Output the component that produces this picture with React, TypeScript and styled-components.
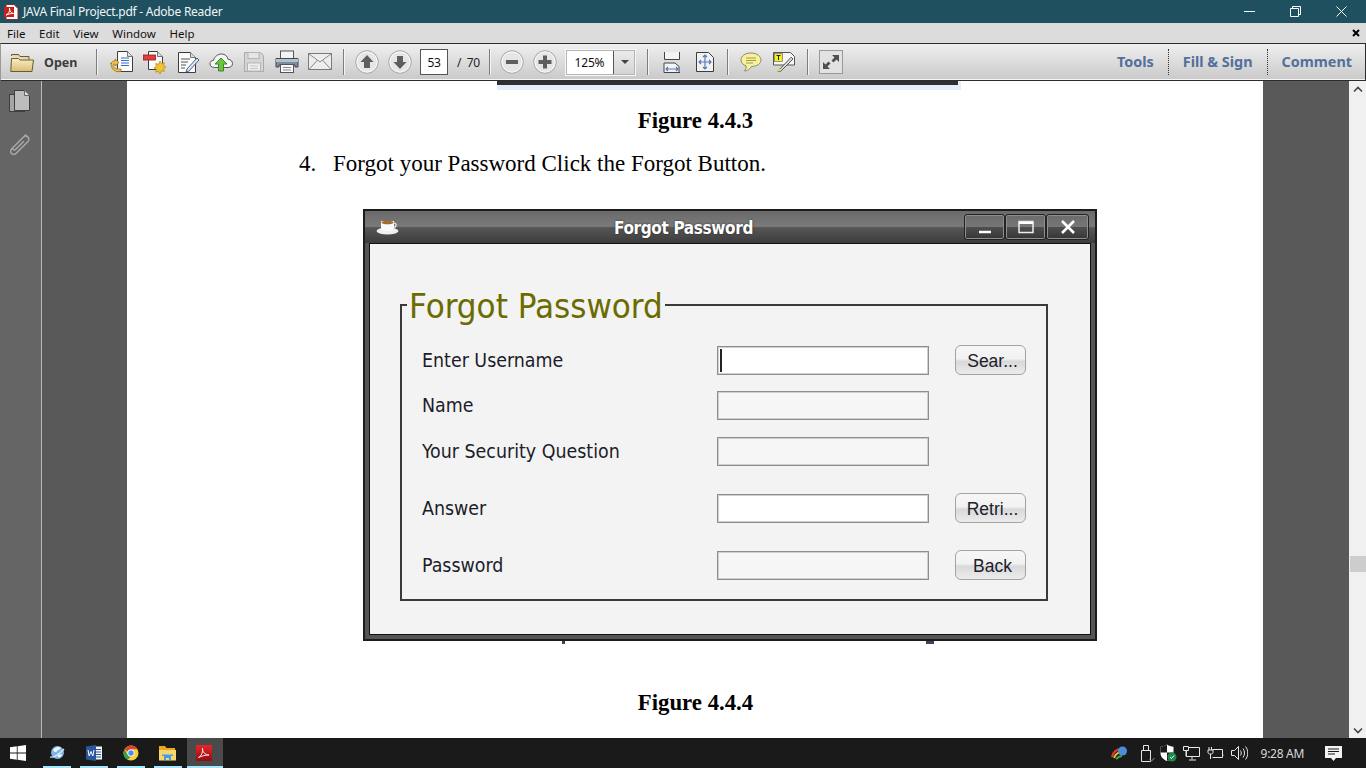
import * as React from "react";
import styled, { createGlobalStyle } from "styled-components";

const GlobalStyle = createGlobalStyle`
  html, body {
    margin: 0;
    padding: 0;
    width: 1366px;
    height: 768px;
    overflow: hidden;
    background: #595959;
  }
  * { box-sizing: border-box; }
`;

const UI_FONT = `"Noto Sans", "Open Sans", sans-serif`;
const TAHOMA = `"DejaVu Sans", "Noto Sans", sans-serif`;

const Shell = styled.div`
  width: 1366px;
  height: 768px;
  display: flex;
  flex-direction: column;
  font-family: ${UI_FONT};
  overflow: hidden;
`;

/* ---------- title bar ---------- */

const TitleBar = styled.div`
  height: 23px;
  flex: none;
  background: #1e505f;
  display: flex;
  align-items: center;
  padding-left: 4px;
  color: #f2f5f6;
  font-size: 12px;
`;

const TitleText = styled.span`
  margin-left: 4px;
  letter-spacing: -0.25px;
`;

const CaptionButtons = styled.div`
  margin-left: auto;
  display: flex;
  height: 100%;
  padding-right: 2px;
`;

const CaptionButton = styled.div`
  width: 46px;
  height: 100%;
  display: flex;
  align-items: center;
  justify-content: center;
`;

/* ---------- menu bar ---------- */

const MenuBar = styled.div`
  height: 20px;
  flex: none;
  background: #dcdcdc;
  display: flex;
  align-items: center;
  padding: 0 6px 0 7px;
  gap: 13.7px;
  font-size: 11.5px;
  color: #111;
`;

const MenuClose = styled.div`
  margin-left: auto;
  display: flex;
`;

/* ---------- toolbar ---------- */

const Toolbar = styled.div`
  height: 38px;
  flex: none;
  display: flex;
  align-items: center;
  border: 1px solid #2c2c2c;
  border-left-color: #9a9a9a;
  background: linear-gradient(#efefef, #c9c9c9);
  box-shadow: inset 0 -1px 0 #f6f6f6;
`;

const OpenButton = styled.div`
  width: 95px;
  display: flex;
  align-items: center;
  padding-left: 9px;
  gap: 10px;
  font-size: 12.5px;
  font-weight: 700;
  color: #3c3c3c;
`;

const Sep = styled.div`
  width: 2px;
  height: 26px;
  flex: none;
  background: linear-gradient(90deg, #7d7d7d 50%, #f4f4f4 50%);
`;

const Group = styled.div<{ $ml: number }>`
  display: flex;
  align-items: center;
  margin-left: ${({ $ml }) => $ml}px;
`;

const Slot = styled.div`
  width: 33px;
  height: 26px;
  display: flex;
  align-items: center;
  justify-content: center;
`;

const PageBox = styled.div`
  width: 28px;
  height: 26px;
  background: #fff;
  border: 1px solid #555;
  display: flex;
  align-items: center;
  justify-content: center;
  font-size: 12px;
  color: #111;
  letter-spacing: -0.3px;
`;

const PageTotal = styled.div`
  width: 23px;
  font-size: 12px;
  color: #222;
  white-space: pre;
  letter-spacing: -0.3px;
`;

const ZoomCombo = styled.div`
  width: 71px;
  height: 27px;
  border: 1px solid #f6f6f6;
  display: flex;
  outline: 1px solid #b5b5b5;
  outline-offset: -2px;
`;

const ZoomValue = styled.div`
  width: 48px;
  background: #fff;
  border-right: 1px solid #555;
  display: flex;
  align-items: center;
  justify-content: center;
  font-size: 12px;
  color: #111;
  letter-spacing: -0.2px;
`;

const ZoomArrow = styled.div`
  flex: 1;
  display: flex;
  align-items: center;
  justify-content: center;
  background: linear-gradient(#ededed, #d2d2d2);

  &::after {
    content: "";
    border-left: 4px solid transparent;
    border-right: 4px solid transparent;
    border-top: 4px solid #444;
  }
`;

const TaskTabs = styled.div`
  margin-left: auto;
  display: flex;
  align-items: center;
  height: 100%;
  padding-right: 13px;
`;

const TaskTab = styled.div<{ $divided?: boolean }>`
  font-size: 14.4px;
  font-weight: 700;
  color: #51709a;
  height: 26px;
  line-height: 25px;
  padding-left: ${({ $divided }) => ($divided ? 14 : 0)}px;
  padding-right: 14px;
  border-left: ${({ $divided }) => ($divided ? "1px dotted #333" : "none")};

  &:last-child {
    padding-right: 0;
  }
`;

/* ---------- document ---------- */

const Main = styled.div`
  flex: 1;
  min-height: 0;
  display: flex;
`;

const Rail = styled.div`
  width: 42px;
  flex: none;
  background: #656565;
  border-right: 1px solid #b9b9b9;
  display: flex;
  flex-direction: column;
  align-items: center;
  padding: 9px 3px 0 0;
  gap: 20px;
`;

const DocArea = styled.div`
  flex: 1;
  min-width: 0;
  background: #595959;
  padding: 0 86px 0 85px;
`;

const Page = styled.div`
  height: 100%;
  background: #fff;
  overflow: hidden;
  font-family: "Liberation Serif", serif;
  color: #000;
`;

const ClippedFigure = styled.div`
  width: 464px;
  height: 9px;
  margin-left: 370px;
  background: #e4eefa;
`;

const ClippedEdge = styled.div`
  width: 461px;
  height: 4px;
  background: #2f2f33;
`;

const Caption = styled.div<{ $mt: number }>`
  margin-top: ${({ $mt }) => $mt}px;
  height: 24px;
  line-height: 24px;
  font-size: 22.8px;
  font-weight: 700;
  text-align: center;
  padding-left: 1px;
`;

const ListItem = styled.div`
  margin-top: 19px;
  padding-left: 172px;
  height: 24px;
  line-height: 24px;
  font-size: 23px;
  display: flex;
`;

const ListNumber = styled.span`
  width: 34px;
`;

/* ---------- screenshot of the java window inside the page ---------- */

const Frame = styled.div`
  margin: 33px 0 0 236px;
  width: 734px;
  height: 432px;
  border: 2px solid #1c1c1c;
  background: #555;
  display: flex;
  flex-direction: column;
  padding: 0 4px 4px;
`;

const FrameTitle = styled.div`
  height: 32px;
  flex: none;
  margin: 0 -4px;
  padding: 3px 7px 4px 11px;
  display: flex;
  align-items: center;
  background: linear-gradient(#6a6a6a, #7a7a7a 48%, #565656 52%, #3c3c3c);
`;

const FrameTitleText = styled.div`
  margin: 2px 0 0 215px;
  font-family: ${TAHOMA};
  font-stretch: condensed;
  font-size: 17px;
  font-weight: 700;
  letter-spacing: -0.35px;
  color: #fff;
  text-shadow: 0 0 2px #222;
`;

const FrameButtons = styled.div`
  margin-left: auto;
  display: flex;
  gap: 2px;
`;

const FrameButton = styled.div<{ $wide?: boolean }>`
  width: ${({ $wide }) => ($wide ? 41 : 39)}px;
  height: 24px;
  border: 1px solid #8f8f8f;
  outline: 1px solid #222;
  border-radius: 2px;
  display: flex;
  align-items: center;
  justify-content: center;
  background: linear-gradient(#6c6c6c, #767676 48%, #4e4e4e 52%, #383838);
`;

const FrameBody = styled.div`
  flex: 1;
  border: 1px solid #111;
  background: #f3f3f3;
  padding: 41px 42px 0 30px;
`;

const Fields = styled.fieldset`
  margin: 0;
  padding: 0 20px 20px;
  min-width: 0;
  border: 2px solid #3a3a3a;
`;

const FieldsLegend = styled.legend`
  margin-left: -15px;
  padding: 0 2px;
  height: 40px;
  line-height: 42px;
  font-family: ${TAHOMA};
  font-stretch: condensed;
  font-size: 34.6px;
  color: #6b6b00;
`;

const FormRow = styled.div<{ $mt: number }>`
  display: grid;
  grid-template-columns: 269px 212px 71px;
  column-gap: 26px;
  height: 29px;
  align-items: center;
  margin-top: ${({ $mt }) => $mt}px;
  font-family: ${TAHOMA};
  font-stretch: condensed;
  font-size: 19.4px;
  color: #1c1c2a;
`;

const Field = styled.div<{ $disabled?: boolean }>`
  height: 29px;
  border: 1px solid #8e8e8e;
  box-shadow: inset 0 0 0 1px #cfcfcf;
  background: ${({ $disabled }) => ($disabled ? "#f6f6f6" : "#fff")};
  display: flex;
  align-items: center;
  padding-left: 2px;
`;

const Caret = styled.div`
  width: 2px;
  height: 23px;
  background: #222;
`;

const SwingButton = styled.div`
  height: 30px;
  border: 1px solid #a3a3a3;
  border-radius: 6px;
  background: linear-gradient(#f6f6f6, #f2f2f2 45%, #d9d9d9 55%, #ececec);
  display: flex;
  align-items: center;
  justify-content: center;
  padding: 2px 0 0 4px;
  font-family: "Liberation Sans", sans-serif;
  font-size: 17.5px;
  color: #20202c;
`;

const Ticks = styled.div`
  margin-left: 435px;
  width: 372px;
  height: 3px;
  display: flex;
  justify-content: space-between;
`;

const Tick = styled.div<{ $w: number }>`
  width: ${({ $w }) => $w}px;
  background: #3b4450;
`;

/* ---------- scrollbar ---------- */

const Scrollbar = styled.div`
  width: 17px;
  flex: none;
  background: #f0f0f0;
  display: flex;
  flex-direction: column;
  align-items: center;
  padding: 5px 0 4px;
`;

const Thumb = styled.div`
  width: 16px;
  height: 16px;
  margin-top: 463px;
  background: #cdcdcd;
`;

const ScrollEnd = styled.div`
  margin-top: auto;
  display: flex;
`;

/* ---------- taskbar ---------- */

const Taskbar = styled.div`
  height: 30px;
  flex: none;
  background: #1a1a1a;
  display: flex;
  align-items: stretch;
`;

const StartButton = styled.div`
  width: 39px;
  display: flex;
  align-items: center;
  padding-left: 10px;
`;

const TaskItem = styled.div<{ $active?: boolean }>`
  width: ${({ $active }) => ($active ? 36 : 37)}px;
  display: flex;
  align-items: center;
  justify-content: center;
  padding-right: 2px;
  position: relative;
  background: ${({ $active }) => ($active ? "#4a4a4a" : "transparent")};

  &::after {
    content: "";
    position: absolute;
    bottom: 0;
    left: ${({ $active }) => ($active ? 0 : 4)}px;
    right: ${({ $active }) => ($active ? 0 : 5)}px;
    height: 2px;
    background: #a6e7fd;
  }
`;

const Tray = styled.div`
  margin-left: auto;
  display: flex;
  align-items: center;
  padding-right: 24px;
`;

const TrayIcon = styled.div<{ $ml: number }>`
  margin-left: ${({ $ml }) => $ml}px;
  display: flex;
`;

const Clock = styled.div`
  margin-left: 13px;
  margin-right: 21px;
  font-size: 12px;
  color: #d8d8d8;
  letter-spacing: -0.3px;
`;

/* ---------- drawings ---------- */

const ReaderDoc = () => (
  <svg width="15" height="16" viewBox="0 0 15 16">
    <path d="M2 .5h8l4 4v11H2z" fill="#fff" stroke="#8a2a2a" />
    <rect x="0" y="3" width="10" height="10" fill="#c8201e" />
    <path d="M2 11c3-1 4-4 3.5-7 0 3 1.500 5 4 5.500-3 0-5 .5-7.500 1.500z" fill="none" stroke="#fff" strokeWidth="1" />
  </svg>
);

const Line = ({ d, w = 1, c = "#fff" }: { d: string; w?: number; c?: string }) => (
  <path d={d} fill="none" stroke={c} strokeWidth={w} />
);

const FolderIcon = () => (
  <svg width="24" height="20" viewBox="0 0 24 20">
    <defs>
      <linearGradient id="fold" x1="0" y1="0" x2="0" y2="1">
        <stop offset="0" stopColor="#fbeec0" />
        <stop offset="1" stopColor="#d9bd78" />
      </linearGradient>
    </defs>
    <path d="M1.500 4V2.500h7l1.500 2h9v3" fill="#e6d6a2" stroke="#6a5a30" />
    <path d="M.8 19.500 1.500 6.500h7L10 8h13.500l-1.500 11.500z" fill="url(#fold)" stroke="#6a5a30" />
  </svg>
);

const DocShape = ({ x = 7, y = 1, w = 15, h = 20 }: { x?: number; y?: number; w?: number; h?: number }) => (
  <>
    <path
      d={`M${x + 0.5} ${y + 0.5}h${w - 5}l5 5v${h - 5}h-${w}z`}
      fill="#fbfbfb"
      stroke="#3c3c3c"
    />
    <path d={`M${x + w - 4.500} ${y + 0.5}v5h5`} fill="#ddd" stroke="#777" />
  </>
);

const OpenDocIcon = () => (
  <svg width="24" height="24" viewBox="0 0 24 24">
    <DocShape />
    <Line d="M11 8h8M11 10.500h8M11 13h8M11 15.500h8" c="#3a6fc8" w={1.200} />
    <path d="M1 13c0-2 2-3 4-3v-2l4 3.500-4 3.500v-2c-1 0-2 .5-2 2 0 2 3 3 8 3v2.500c-6 1-10-2-10-8.500z" fill="#f0c050" stroke="#9a7420" strokeWidth=".8" transform="translate(0 1)" />
  </svg>
);

const RedactIcon = () => (
  <svg width="24" height="24" viewBox="0 0 24 24">
    <DocShape x={5} y={1} w={14} h={18} />
    <rect x="0.5" y="5" width="12" height="5" fill="#e43c3c" stroke="#8c2020" strokeWidth=".8" />
    <path d="M17 11l1.500 2.500 2.800-.7-.7 2.800 2.400 1.500-2.400 1.500.7 2.800-2.800-.7L17 24l-1.500-2.500-2.800.7.7-2.800L11 17.900l2.400-1.500-.7-2.800 2.800.7z" fill="#f2c230" stroke="#a8861c" strokeWidth=".7" />
  </svg>
);

const EditDocIcon = () => (
  <svg width="24" height="24" viewBox="0 0 24 24">
    <DocShape x={2} y={2} w={17} h={20} />
    <Line d="M5 9h9M5 12h7M5 15h5M5 18h4" c="#555" />
    <path d="M11 19l-1 3 3-1L23 10l-2-2z" fill="#dfe7f3" stroke="#47628e" />
  </svg>
);

const CloudIcon = () => (
  <svg width="24" height="22" viewBox="0 0 24 22">
    <path d="M5.500 16.500C2.500 16.500 1 14.800 1 12.800c0-2 1.500-3.500 3.500-3.500C5.500 5.500 9 3 12.500 3c3.500 0 6 2.300 6.500 5.300 2.800.2 4.500 2 4.500 4.300 0 2.300-1.800 3.900-4.500 3.900z" fill="#f6f6f6" stroke="#555" />
    <path d="M12 7l-6 6h3.500v7h5v-7H18z" fill="#6cc43c" stroke="#3a8a28" />
  </svg>
);

const FloppyIcon = () => (
  <svg width="20" height="22" viewBox="0 0 20 22">
    <path d="M.5 1.500h16l3 3v16H.5z" fill="#d5d5d5" stroke="#aaa" />
    <rect x="4" y="1.500" width="11" height="6" fill="#e6e6e6" stroke="#b5b5b5" />
    <rect x="3.500" y="12" width="13" height="8" fill="#eee" stroke="#b5b5b5" />
    <Line d="M6 15h8M6 17.500h8" c="#c4c4c4" />
  </svg>
);

const PrinterIcon = () => (
  <svg width="24" height="24" viewBox="0 0 24 24">
    <rect x="5.500" y="1" width="13" height="8" fill="#f4f4f4" stroke="#555" />
    <path d="M1 8.500h22V17h-3v-2H4v2H1z" fill="#7d8d9d" stroke="#3e4a58" />
    <rect x="1" y="9" width="22" height="3" fill="#b4c0cc" />
    <rect x="5.500" y="14.500" width="13" height="8" fill="#fafafa" stroke="#555" />
    <Line d="M8 17.500h8M8 20h8" c="#888" />
  </svg>
);

const MailIcon = () => (
  <svg width="24" height="18" viewBox="0 0 24 18">
    <rect x=".5" y=".5" width="23" height="16" fill="#ededed" stroke="#7a7a7a" />
    <Line d="M1 1l11 8 11-8M1 16.500l8.500-9.500M23 16.500l-8.500-9.500" c="#8c8c8c" />
  </svg>
);

const RoundButton = ({ kind }: { kind: "up" | "down" | "minus" | "plus" }) => {
  const shapes = {
    up: "M12 5l6.500 7H15v6H9v-6H5.500z",
    down: "M12 19l6.500-7H15V6H9v6H5.500z",
    minus: "M6 10h12v4H6z",
    plus: "M10 5.500h4V10h4.500v4H14v4.500h-4V14H5.500v-4H10z",
  };
  return (
    <svg width="24" height="24" viewBox="0 0 24 24">
      <circle cx="12" cy="12" r="11.300" fill="#e6e6e6" stroke="#a8a8a8" />
      <circle cx="12" cy="12" r="10" fill="none" stroke="#f8f8f8" />
      <path d={shapes[kind]} fill="#5e5e5e" />
    </svg>
  );
};

const FitWidthIcon = () => (
  <svg width="18" height="21" viewBox="0 0 18 21">
    <path d="M1.500 0v7.500h15V0" fill="#f4f4f4" stroke="#444" />
    <path d="M1 20.500V11h11l4 3.500v6" fill="#f4f4f4" stroke="#444" />
    <path d="M1 20.500h16" stroke="#444" />
    <Line d="M3 17h12M5 15l-2 2 2 2M13 15l2 2-2 2" c="#5a78b8" w={1.200} />
  </svg>
);

const FitPageIcon = () => (
  <svg width="18" height="20" viewBox="0 0 18 20">
    <path d="M.5.500h12l5 5v14H.5z" fill="#f2f2f2" stroke="#3c3c3c" />
    <Line d="M9 3v14M3 10h12M7 5l2-2 2 2M7 15l2 2 2-2M5 8l-2 2 2 2M13 8l2 2-2 2" c="#5a78b8" w={1.200} />
  </svg>
);

const CommentIcon = () => (
  <svg width="22" height="20" viewBox="0 0 22 20">
    <path d="M11 1C5 1 1 4 1 8c0 3 2.500 5 5 5.800C6.500 15.500 6 17 4.500 19c3 0 5.500-2 7-4.500 5.500 0 9.500-3 9.500-6.500S17 1 11 1z" fill="#f8f09a" stroke="#8a8a70" />
    <Line d="M6 6h10M6 8.500h10M6 11h7" c="#a09a50" />
  </svg>
);

const SignIcon = () => (
  <svg width="22" height="20" viewBox="0 0 22 20">
    <path d="M.5.500h17l4 4V13H.5z" fill="#f6f6f6" stroke="#555" />
    <rect x="1.500" y="1.500" width="8" height="8" fill="#f4ee20" stroke="#555" strokeWidth=".6" />
    <Line d="M3.500 3.500h4M5.500 3.500v4.500" c="#222" />
    <path d="M6 18l-1 2 2.500-.5L20 7l-1.800-1.800z" fill="#dcdcdc" stroke="#555" />
    <circle cx="6" cy="18" r="1.500" fill="#e4d050" />
  </svg>
);

const FullScreenIcon = () => (
  <svg width="24" height="24" viewBox="0 0 24 24">
    <rect x=".5" y=".5" width="23" height="23" fill="#e2e2e2" stroke="#9a9a9a" />
    <path d="M13 5h7v7l-2.500-2.500-3 3-2-2 3-3zM11 19H4v-7l2.500 2.500 3-3 2 2-3 3z" fill="#505050" />
  </svg>
);

const PagesIcon = () => (
  <svg width="21" height="22" viewBox="0 0 21 22">
    <rect x=".5" y="4.500" width="15" height="17" fill="#a5a5a5" stroke="#3e3e3e" />
    <path d="M5.500.500h10l5 5v15h-15z" fill="#bdbdbd" stroke="#3e3e3e" />
    <path d="M15.500.5v5h5" fill="#dcdcdc" stroke="#666" />
  </svg>
);

const ClipIcon = () => (
  <svg width="22" height="24" viewBox="0 0 22 24">
    <path d="M18 2.500 4 16.500c-2 2-1.500 4-.5 5s3 1.500 5-.5L20 9.500c1.500-1.500 1-3.500 0-4.500s-3-1.500-4.500 0L5.500 15c-1 1-.8 2-.2 2.500s1.500.7 2.500-.3l8-8" fill="none" stroke="#a8a8a8" strokeWidth="1.500" />
  </svg>
);

const CupIcon = () => (
  <svg width="23" height="16" viewBox="0 0 23 16">
    <ellipse cx="11.500" cy="12" rx="11" ry="3.500" fill="#f0f0f0" />
    <path d="M5 2h13v6c0 3-3 4-6.500 4S5 11 5 8z" fill="#fafafa" />
    <ellipse cx="11.500" cy="3.500" rx="6" ry="1.800" fill="#a86a28" />
    <path d="M18 4c3 0 3 4-1 5" fill="none" stroke="#eee" strokeWidth="1.200" />
  </svg>
);

const WinLogo = () => (
  <svg width="16" height="16" viewBox="0 0 16 16">
    <path d="M0 2.300 6.800 1.300v6.300H0zM7.600 1.200 16 0v7.600H7.600zM0 8.400h6.800v6.300L0 13.700zM7.600 8.400H16V16l-8.400-1.200z" fill="#fff" />
  </svg>
);

const GlobeIcon = () => (
  <svg width="16" height="16" viewBox="0 0 16 16">
    <circle cx="8.500" cy="7.500" r="6.500" fill="#7fb6ea" />
    <path d="M4 5c2-3 6-4 8-2-1 2-3 1-4 3s-3 1-4-1zM9 10c2-1 4-1 4 0-1 2-3 3-4 2z" fill="#f2f6fa" />
    <path d="M1 12c3 1 9-2 14-8" fill="none" stroke="#dfe9f2" strokeWidth="1.200" />
  </svg>
);

const WordIcon = () => (
  <svg width="16" height="16" viewBox="0 0 16 16">
    <rect x="6" y="1.500" width="10" height="13" fill="#f4f7fb" />
    <Line d="M9 4.500h6M9 7h6M9 9.500h6M9 12h6" c="#2b579a" />
    <path d="M0 1.500 10 0v16L0 14.500z" fill="#2b579a" />
    <path d="M2 5l1.200 6L5 6.500 6.800 11 8 5" fill="none" stroke="#fff" strokeWidth="1" />
  </svg>
);

const ChromeIcon = () => (
  <svg width="16" height="16" viewBox="0 0 16 16">
    <circle cx="8" cy="8" r="7.500" fill="#f7cf3d" />
    <path d="M1.500 4.300A7.500 7.500 0 0 1 14.500 4.300H8a3.800 3.800 0 0 0-3.400 2.200z" fill="#dc4437" />
    <path d="M1.500 4.300 4.700 9.900a3.800 3.800 0 0 0 3 1.900L4.500 14.700A7.500 7.500 0 0 1 1.500 4.300z" fill="#2fa14f" />
    <circle cx="8" cy="8" r="3.500" fill="#fff" />
    <circle cx="8" cy="8" r="2.700" fill="#4c8bf0" />
  </svg>
);

const ExplorerIcon = () => (
  <svg width="17" height="16" viewBox="0 0 17 16">
    <path d="M0 1h6l1.500 2H16v3H0z" fill="#e8a820" />
    <path d="M0 5h17v10.500H0z" fill="#fbd46a" />
    <path d="M5 15.500V11h7v4.500h-2V13H7v2.500z" fill="#3f9ee8" />
    <rect x="3" y="9.500" width="11" height="1.500" fill="#3f9ee8" />
  </svg>
);

const AcrobatIcon = () => (
  <svg width="16" height="16" viewBox="0 0 16 16">
    <defs>
      <linearGradient id="acro" x1="0" y1="0" x2="0" y2="1">
        <stop offset="0" stopColor="#e8262a" />
        <stop offset="1" stopColor="#8e0c10" />
      </linearGradient>
    </defs>
    <rect width="16" height="16" fill="url(#acro)" />
    <path d="M2.500 12.500c3-1.500 4.500-5 4-9.500 0 4 2 6.500 6.500 7-4 0-7 1-10.500 2.500z" fill="none" stroke="#f6e6e6" strokeWidth="1" />
  </svg>
);

const IdmIcon = () => (
  <svg width="17" height="14" viewBox="0 0 17 14">
    <path d="M1 11c1-5 5-8 9-8" fill="none" stroke="#d83c2c" strokeWidth="2.200" />
    <path d="M3 12c1-3 4-6 7-6" fill="none" stroke="#e8c830" strokeWidth="2" />
    <path d="M5 13c2-2 4-3 6-3" fill="none" stroke="#3aa83c" strokeWidth="2" />
    <circle cx="11.500" cy="5" r="4.500" fill="#4c8cd8" />
  </svg>
);

const UsbIcon = () => (
  <svg width="14" height="17" viewBox="0 0 14 17">
    <Line d="M.5 5.500h9v11h-9zM2.500 5.500V.5h5v5" c="#e4e4e4" />
    <Line d="M8.500 14.500l2 1.500 3-3" c="#999" />
  </svg>
);

const ShieldIcon = () => (
  <svg width="18" height="18" viewBox="0 0 18 18">
    <path d="M8 .5c2 1.500 4 2 6.500 2.200V9c0 4-3 6.500-6.500 8C4.500 15.500 1.500 13 1.500 9V2.700C4 2.500 6 2 8 .5z" fill="#fff" />
    <path d="M8 .5v8H1.500V2.700C4 2.500 6 2 8 .5zM8 8.500h6.500C14 12 11 15.500 8 17z" fill="#1a1a1a" />
    <circle cx="13" cy="13" r="4.500" fill="#1c8a4a" />
    <Line d="M11 13l1.500 1.500 2.500-3" />
  </svg>
);

const NetworkIcon = () => (
  <svg width="17" height="15" viewBox="0 0 17 15">
    <Line d="M3.500 1.500h13v9h-13zM9 10.500v3M6 14h7" c="#e8e8e8" />
    <path d="M.5.500h5v4h-5z" fill="#1a1a1a" stroke="#e8e8e8" />
    <Line d="M3 4.500v6" c="#e8e8e8" />
  </svg>
);

const PowerIcon = () => (
  <svg width="17" height="14" viewBox="0 0 17 14">
    <Line d="M5.500 3.500h10v8h-10M15.500 6v3h1" c="#e8e8e8" />
    <Line d="M2 1v3M4.500 1v3M1 4h5v2.500c0 1-1 1.500-2.500 1.500S1 7.500 1 6.500zM3.500 8v5" c="#e8e8e8" />
  </svg>
);

const VolumeIcon = () => (
  <svg width="17" height="16" viewBox="0 0 17 16">
    <path d="M.5 5.500h3l4-4v13l-4-4h-3z" fill="none" stroke="#e8e8e8" />
    <Line d="M9.500 5.500c1 1.500 1 3.500 0 5M12 3.500c2 2.500 2 6.500 0 9M14.500 1.500c3 3.500 3 9.500 0 13" c="#e8e8e8" />
  </svg>
);

const NotifyIcon = () => (
  <svg width="17" height="17" viewBox="0 0 17 17">
    <path d="M0 1h17v12h-6l-2.500 3L6 13H0z" fill="#f4f4f4" />
    <path d="M3 4h11M3 6.500h11M3 9h7" stroke="#1a1a1a" />
  </svg>
);

export default function App() {
  return (
    <Shell>
      <GlobalStyle />
      <TitleBar>
        <ReaderDoc />
        <TitleText>JAVA Final Project.pdf - Adobe Reader</TitleText>
        <CaptionButtons>
          <CaptionButton>
            <svg width="11" height="11" viewBox="0 0 11 11">
              <Line d="M0 5.500h11" />
            </svg>
          </CaptionButton>
          <CaptionButton>
            <svg width="11" height="11" viewBox="0 0 11 11">
              <Line d="M.5 2.500h8v8h-8zM2.500 2.500v-2h8v8h-2" />
            </svg>
          </CaptionButton>
          <CaptionButton>
            <svg width="11" height="11" viewBox="0 0 11 11">
              <Line d="M.5.500l10 10M10.500.500l-10 10" />
            </svg>
          </CaptionButton>
        </CaptionButtons>
      </TitleBar>

      <MenuBar>
        <span>File</span>
        <span>Edit</span>
        <span>View</span>
        <span>Window</span>
        <span>Help</span>
        <MenuClose>
          <svg width="8" height="8" viewBox="0 0 8 8">
            <Line d="M1 1l6 6M7 1l-6 6" c="#000" w={2} />
          </svg>
        </MenuClose>
      </MenuBar>

      <Toolbar>
        <OpenButton>
          <FolderIcon />
          <span>Open</span>
        </OpenButton>
        <Sep />
        <Group $ml={7}>
          <Slot><OpenDocIcon /></Slot>
          <Slot><RedactIcon /></Slot>
          <Slot><EditDocIcon /></Slot>
          <Slot><CloudIcon /></Slot>
          <Slot><FloppyIcon /></Slot>
          <Slot><PrinterIcon /></Slot>
          <Slot><MailIcon /></Slot>
        </Group>
        <Group $ml={7}><Sep /></Group>
        <Group $ml={5}>
          <Slot><RoundButton kind="up" /></Slot>
          <Slot><RoundButton kind="down" /></Slot>
        </Group>
        <Group $ml={4}><PageBox>53</PageBox></Group>
        <Group $ml={9}><PageTotal>/  70</PageTotal></Group>
        <Group $ml={9}><Sep /></Group>
        <Group $ml={4}>
          <Slot><RoundButton kind="minus" /></Slot>
          <Slot><RoundButton kind="plus" /></Slot>
        </Group>
        <Group $ml={4}>
          <ZoomCombo>
            <ZoomValue>125%</ZoomValue>
            <ZoomArrow />
          </ZoomCombo>
        </Group>
        <Group $ml={11}><Sep /></Group>
        <Group $ml={6}>
          <Slot><FitWidthIcon /></Slot>
          <Slot><FitPageIcon /></Slot>
        </Group>
        <Group $ml={6}><Sep /></Group>
        <Group $ml={5}>
          <Slot><CommentIcon /></Slot>
          <Slot><SignIcon /></Slot>
        </Group>
        <Group $ml={7}><Sep /></Group>
        <Group $ml={10}><FullScreenIcon /></Group>
        <TaskTabs>
          <TaskTab>Tools</TaskTab>
          <TaskTab $divided>Fill &amp; Sign</TaskTab>
          <TaskTab $divided>Comment</TaskTab>
        </TaskTabs>
      </Toolbar>

      <Main>
        <Rail>
          <PagesIcon />
          <ClipIcon />
        </Rail>
        <DocArea>
          <Page>
            <ClippedFigure>
              <ClippedEdge />
            </ClippedFigure>
            <Caption $mt={19}>Figure 4.4.3</Caption>
            <ListItem>
              <ListNumber>4.</ListNumber>
              <span>Forgot your Password Click the Forgot Button.</span>
            </ListItem>
            <Frame>
              <FrameTitle>
                <CupIcon />
                <FrameTitleText>Forgot Password</FrameTitleText>
                <FrameButtons>
                  <FrameButton>
                    <svg width="14" height="14" viewBox="0 0 14 14">
                      <Line d="M1 12h12" w={2.500} />
                    </svg>
                  </FrameButton>
                  <FrameButton>
                    <svg width="16" height="14" viewBox="0 0 16 14">
                      <path d="M1 1.500h14v11H1z" fill="none" stroke="#eee" strokeWidth="1.500" />
                      <Line d="M1 3h14" w={2} />
                    </svg>
                  </FrameButton>
                  <FrameButton $wide>
                    <svg width="16" height="16" viewBox="0 0 16 16">
                      <Line d="M2 2l12 12M14 2 2 14" w={2.600} />
                    </svg>
                  </FrameButton>
                </FrameButtons>
              </FrameTitle>
              <FrameBody>
                <Fields>
                  <FieldsLegend>Forgot Password</FieldsLegend>
                  <FormRow $mt={20}>
                    <span>Enter Username</span>
                    <Field><Caret /></Field>
                    <SwingButton>Sear...</SwingButton>
                  </FormRow>
                  <FormRow $mt={17}>
                    <span>Name</span>
                    <Field $disabled />
                  </FormRow>
                  <FormRow $mt={17}>
                    <span>Your Security Question</span>
                    <Field $disabled />
                  </FormRow>
                  <FormRow $mt={27}>
                    <span>Answer</span>
                    <Field />
                    <SwingButton>Retri...</SwingButton>
                  </FormRow>
                  <FormRow $mt={28}>
                    <span>Password</span>
                    <Field $disabled />
                    <SwingButton>Back</SwingButton>
                  </FormRow>
                </Fields>
              </FrameBody>
            </Frame>
            <Ticks>
              <Tick $w={3} />
              <Tick $w={8} />
            </Ticks>
            <Caption $mt={47}>Figure 4.4.4</Caption>
          </Page>
        </DocArea>
        <Scrollbar>
          <svg width="10" height="7" viewBox="0 0 10 7">
            <Line d="M1 5.500l4-4 4 4" c="#444" w={1.600} />
          </svg>
          <Thumb />
          <ScrollEnd>
            <svg width="10" height="7" viewBox="0 0 10 7">
              <Line d="M1 1.500l4 4 4-4" c="#444" w={1.600} />
            </svg>
          </ScrollEnd>
        </Scrollbar>
      </Main>

      <Taskbar>
        <StartButton><WinLogo /></StartButton>
        <TaskItem><GlobeIcon /></TaskItem>
        <TaskItem><WordIcon /></TaskItem>
        <TaskItem><ChromeIcon /></TaskItem>
        <TaskItem><ExplorerIcon /></TaskItem>
        <TaskItem $active><AcrobatIcon /></TaskItem>
        <Tray>
          <TrayIcon $ml={0}><IdmIcon /></TrayIcon>
          <TrayIcon $ml={13}><UsbIcon /></TrayIcon>
          <TrayIcon $ml={4}><ShieldIcon /></TrayIcon>
          <TrayIcon $ml={6}><NetworkIcon /></TrayIcon>
          <TrayIcon $ml={7}><PowerIcon /></TrayIcon>
          <TrayIcon $ml={7}><VolumeIcon /></TrayIcon>
          <Clock>9:28 AM</Clock>
          <NotifyIcon />
        </Tray>
      </Taskbar>
    </Shell>
  );
}
